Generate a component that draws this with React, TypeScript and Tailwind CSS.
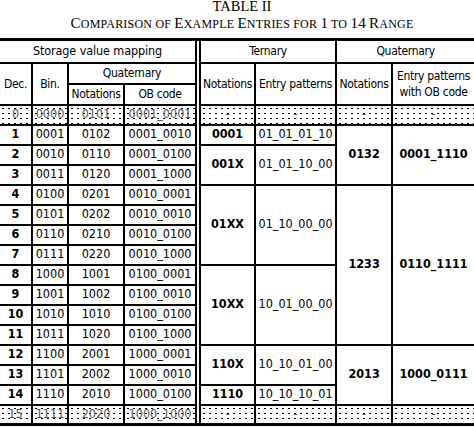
import React from "react";

const dots =
  "bg-[radial-gradient(circle,#000_0.8px,transparent_1.1px)] bg-size-[6px_5px]";

const left: string[][] = [
  ["1", "0001", "0102", "0001_0010"],
  ["2", "0010", "0110", "0001_0100"],
  ["3", "0011", "0120", "0001_1000"],
  ["4", "0100", "0201", "0010_0001"],
  ["5", "0101", "0202", "0010_0010"],
  ["6", "0110", "0210", "0010_0100"],
  ["7", "0111", "0220", "0010_1000"],
  ["8", "1000", "1001", "0100_0001"],
  ["9", "1001", "1002", "0100_0010"],
  ["10", "1010", "1010", "0100_0100"],
  ["11", "1011", "1020", "0100_1000"],
  ["12", "1100", "2001", "1000_0001"],
  ["13", "1101", "2002", "1000_0010"],
  ["14", "1110", "2010", "1000_0100"],
];

type RCell = { t: string; rs: number; bold?: boolean };
const right: Record<number, RCell[]> = {
  0: [
    { t: "0001", rs: 1, bold: true },
    { t: "01_01_01_10", rs: 1 },
    { t: "0132", rs: 3, bold: true },
    { t: "0001_1110", rs: 3, bold: true },
  ],
  1: [
    { t: "001X", rs: 2, bold: true },
    { t: "01_01_10_00", rs: 2 },
  ],
  3: [
    { t: "01XX", rs: 4, bold: true },
    { t: "01_10_00_00", rs: 4 },
    { t: "1233", rs: 8, bold: true },
    { t: "0110_1111", rs: 8, bold: true },
  ],
  7: [
    { t: "10XX", rs: 4, bold: true },
    { t: "10_01_00_00", rs: 4 },
  ],
  11: [
    { t: "110X", rs: 2, bold: true },
    { t: "10_10_01_00", rs: 2 },
    { t: "2013", rs: 3, bold: true },
    { t: "1000_0111", rs: 3, bold: true },
  ],
  13: [
    { t: "1110", rs: 1, bold: true },
    { t: "10_10_10_01", rs: 1 },
  ],
};

const cell = "border-2 border-black text-center p-0 align-middle whitespace-nowrap";
const head = "text-[12px] tracking-[-0.3px]";

function DottedRow({ vals }: { vals: string[] }) {
  return (
    <tr className="h-[20px]">
      {vals.map((v, i) => (
        <td
          key={i}
          className={`${cell} ${dots} border-x-dotted text-[#555] ${i === 0 ? "border-l-0" : ""}`}
        >
          {v}
        </td>
      ))}
      {[0, 1, 2, 3].map((i) => (
        <td key={`r${i}`} className={`${cell} ${dots} text-[#555] ${i === 3 ? "border-r-0" : ""}`}>
          -
        </td>
      ))}
    </tr>
  );
}

function Big({ children }: { children: React.ReactNode }) {
  return <span className="text-[15px]">{children}</span>;
}

export default function App() {
  return (
    <div className="w-[474px] h-[428px] bg-white overflow-hidden text-black">
      <div className="font-['Liberation_Serif',serif] text-center leading-[17px] -mt-[2px] pl-[10px]">
        <div className="text-[14.5px]">TABLE II</div>
        <div className="text-[12px] tracking-[0.2px]">
          <Big>C</Big>OMPARISON OF <Big>E</Big>XAMPLE <Big>E</Big>NTRIES FOR <Big>1</Big> TO{" "}
          <Big>14</Big> <Big>R</Big>ANGE
        </div>
      </div>
      <table className="mt-[5px] w-[474px] table-fixed border-collapse border-t-[3px] border-b-[3px] border-black font-['DejaVu_Sans_Condensed','DejaVu_Sans',sans-serif] text-[12.5px] leading-none">
        <colgroup>
          <col className="w-[32px]" />
          <col className="w-[36px]" />
          <col className="w-[56px]" />
          <col className="w-[72px]" />
          <col className="w-[4px]" />
          <col className="w-[55px]" />
          <col className="w-[81px]" />
          <col className="w-[56px]" />
          <col className="w-[82px]" />
        </colgroup>
        <tbody>
          <tr className="h-[23px]">
            <td colSpan={4} className={`${cell} border-l-0 text-[12.5px] tracking-[-0.1px]`}>
              Storage value mapping
            </td>
            <td rowSpan={19} className="border-x-2 border-black p-0" />
            <td colSpan={2} className={`${cell} ${head}`}>
              Ternary
            </td>
            <td colSpan={2} className={`${cell} border-r-0 ${head}`}>
              Quaternary
            </td>
          </tr>
          <tr className="h-[21px]">
            <td rowSpan={2} className={`${cell} border-l-0 ${head}`}>
              Dec.
            </td>
            <td rowSpan={2} className={`${cell} ${head}`}>
              Bin.
            </td>
            <td colSpan={2} className={`${cell} ${head}`}>
              Quaternary
            </td>
            <td rowSpan={2} className={`${cell} ${head}`}>
              Notations
            </td>
            <td rowSpan={2} className={`${cell} ${head}`}>
              Entry patterns
            </td>
            <td rowSpan={2} className={`${cell} ${head}`}>
              Notations
            </td>
            <td rowSpan={2} className={`${cell} border-r-0 ${head} leading-[16px]`}>
              Entry patterns
              <br />
              with OB code
            </td>
          </tr>
          <tr className="h-[21px]">
            <td className={`${cell} ${head}`}>Notations</td>
            <td className={`${cell} ${head}`}>OB code</td>
          </tr>
          <DottedRow vals={["0", "0000", "0101", "0001_0001"]} />
          {left.map((r, i) => (
            <tr key={i} className="h-[20px]">
              <td className={`${cell} border-l-0 font-bold`}>{r[0]}</td>
              <td className={cell}>{r[1]}</td>
              <td className={cell}>{r[2]}</td>
              <td className={cell}>{r[3]}</td>
              {(right[i] || []).map((c, j) => (
                <td
                  key={j}
                  rowSpan={c.rs}
                  className={`${cell} ${c.bold ? "font-bold" : ""} ${
                    j === 3 ? "border-r-0" : ""
                  }`}
                >
                  {c.t}
                </td>
              ))}
            </tr>
          ))}
          <DottedRow vals={["15", "1111", "2020", "1000_1000"]} />
        </tbody>
      </table>
    </div>
  );
}
